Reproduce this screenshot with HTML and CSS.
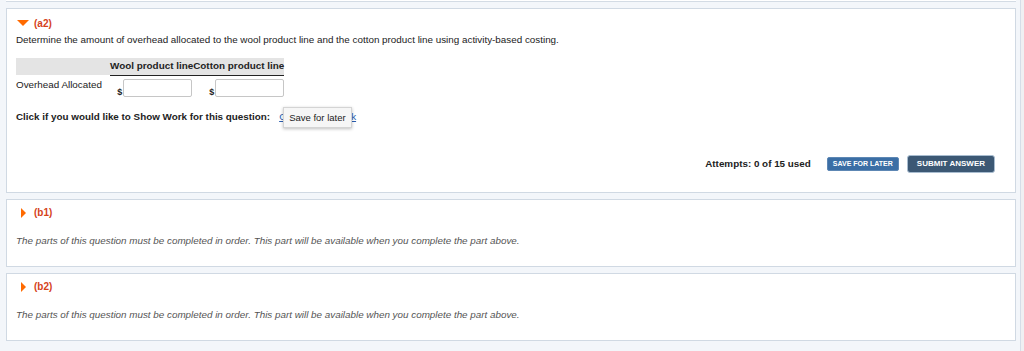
FILE: index.html
```html
<!DOCTYPE html>
<html lang="en">
<head>
  <meta charset="UTF-8">
  <title>Question parts</title>
  <link rel="stylesheet" href="styles.css">
</head>
<body>
  <div class="page">
    <div class="prev-panel"></div>

    <!-- Part a2 -->
    <div class="part">
      <div class="part-head">
        <span class="arrow down"></span>
        <span class="part-label">(a2)</span>
      </div>
      <p class="question">Determine the amount of overhead allocated to the wool product line and the cotton product line using activity-based costing.</p>

      <table class="answer-table">
        <tr class="head-row">
          <th class="blank"></th>
          <th class="col">Wool product line</th>
          <th class="col">Cotton product line</th>
        </tr>
        <tr>
          <td class="row-label">Overhead Allocated</td>
          <td class="cell"><span class="dollar">$</span><input type="text" class="amount first"></td>
          <td class="cell"><span class="dollar">$</span><input type="text" class="amount"></td>
        </tr>
      </table>

      <div class="show-work">
        <span class="show-label">Click if you would like to Show Work for this question:</span>
        <span class="link-wrap">
          <a class="show-link" href="#">Open Show Work</a>
          <span class="tooltip">Save for later</span>
        </span>
      </div>

      <div class="actions">
        <span class="attempts">Attempts: 0 of 15 used</span>
        <button class="btn save">SAVE FOR LATER</button>
        <button class="btn submit">SUBMIT ANSWER</button>
      </div>
    </div>

    <!-- Part b1 -->
    <div class="part locked">
      <div class="part-head">
        <span class="arrow right"></span>
        <span class="part-label">(b1)</span>
      </div>
      <p class="notice">The parts of this question must be completed in order. This part will be available when you complete the part above.</p>
    </div>

    <!-- Part b2 -->
    <div class="part locked">
      <div class="part-head">
        <span class="arrow right"></span>
        <span class="part-label">(b2)</span>
      </div>
      <p class="notice">The parts of this question must be completed in order. This part will be available when you complete the part above.</p>
    </div>
  </div>
  <div class="bottom-band"></div>
</body>
</html>
```

FILE: styles.css
```css
body {
  margin: 0;
  background-color: #f0f0f2;
  font-family: "Liberation Sans", Arial, sans-serif;
  color: #222;
}

.page {
  width: 1021px;
  background-color: #f3f6fa;
  border-right: 1px solid #d6dee8;
  padding: 0 0 4px 6px;
  box-sizing: border-box;
}

.prev-panel {
  width: 1010px;
  height: 2px;
  border-bottom: 1px solid #d3dbe4;
  background: #fff;
  box-sizing: border-box;
  margin-bottom: 6px;
}

.part {
  width: 1010px;
  box-sizing: border-box;
  background: #fff;
  border: 1px solid #d0d9e3;
  padding: 9px 9px 0 9px;
  margin-bottom: 6px;
}

.part-head {
  display: flex;
  align-items: center;
  height: 10px;
}

.arrow {
  display: inline-block;
  width: 0;
  height: 0;
}

.arrow.down {
  border-left: 6px solid transparent;
  border-right: 6px solid transparent;
  border-top: 6px solid #ff6a00;
  margin-left: 1px;
  margin-right: 5px;
}

.arrow.right {
  border-top: 5px solid transparent;
  border-bottom: 5px solid transparent;
  border-left: 5px solid #ff6a00;
  margin-left: 5px;
  margin-right: 8px;
}

.part-label {
  color: #d5421b;
  font-weight: bold;
  font-size: 10px;
}

.question {
  margin: 6px 0 0 0;
  font-size: 9.85px;
  line-height: 12px;
}

.answer-table {
  border-collapse: collapse;
  margin-top: 12px;
  font-size: 9.85px;
}

.head-row {
  background: #e4e4e4;
}

.head-row th {
  height: 17px;
  padding: 0;
  vertical-align: top;
}

.head-row .blank {
  width: 94px;
}

.head-row .col {
  font-weight: bold;
  font-size: 9.9px;
  text-align: left;
  padding-top: 2px;
  height: 13px;
  border-bottom: 1px solid #222;
  box-sizing: border-box;
  white-space: nowrap;
}

.row-label {
  padding: 4px 0 0 0;
  vertical-align: top;
  white-space: nowrap;
}

.cell {
  padding: 3px 0 0 0;
  white-space: nowrap;
  text-align: right;
}

.dollar {
  font-size: 9px;
  font-weight: bold;
  vertical-align: -7px;
  margin-right: 1px;
}

.amount {
  width: 69px;
  height: 18px;
  box-sizing: border-box;
  border: 1px solid #c6c6c6;
  border-radius: 2px;
  margin: 0;
  padding: 0;
  vertical-align: top;
}

.amount.first {
  margin-right: 1px;
}

.show-work {
  display: flex;
  align-items: center;
  margin-top: 14px;
  font-size: 9.85px;
}

.show-label {
  font-weight: bold;
}

.link-wrap {
  position: relative;
  margin-left: 9px;
}

.show-link {
  color: #2a5db0;
  font-size: 9.85px;
}

.tooltip {
  position: absolute;
  left: 4px;
  top: -4px;
  background: #f6f6f6;
  border: 1px solid #d4d4d4;
  box-shadow: 0 1px 3px rgba(0, 0, 0, 0.25);
  font-size: 9.5px;
  color: #222;
  padding: 4px 5px 4px 5px;
  white-space: nowrap;
}

.actions {
  display: flex;
  align-items: center;
  justify-content: flex-end;
  margin-top: 33px;
  padding: 0 11px 19px 0;
}

.attempts {
  font-size: 9.85px;
  font-weight: bold;
  margin-right: 16px;
}

.btn {
  font-family: "Liberation Sans", Arial, sans-serif;
  font-weight: bold;
  color: #fff;
  cursor: pointer;
}

.btn.save {
  background: #3b6ea5;
  border: 1px solid #5d87b4;
  border-radius: 2px;
  font-size: 7px;
  height: 14px;
  padding: 0 5px;
  margin-right: 8px;
}

.btn.submit {
  background: #3c5874;
  border: 1px solid #a9bdd0;
  border-radius: 3px;
  font-size: 8px;
  height: 18px;
  padding: 0 9px;
}

.locked {
  padding-top: 8px;
}

.notice {
  margin: 17px 0 0 0;
  padding-bottom: 19px;
  font-size: 9.85px;
  font-style: italic;
  color: #555;
  line-height: 12px;
}

.bottom-band {
  height: 3px;
  width: 1021px;
  background: #e2e3e6;
}
```
